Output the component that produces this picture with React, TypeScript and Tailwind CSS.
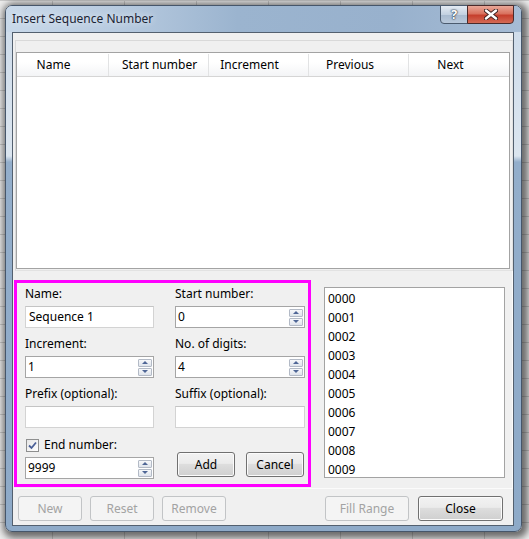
import React from 'react';

const sequence = ['0000', '0001', '0002', '0003', '0004', '0005', '0006', '0007', '0008', '0009'];

function SpinButton({ up }: { up?: boolean }) {
  return (
    <div className="flex h-[8px] w-[14px] items-center justify-center rounded-[1px] border border-[#b3bac6] bg-[linear-gradient(180deg,#f7f8fa,#dfe4ec)]">
      {up ? (
        <div className="h-0 w-0 border-x-[3px] border-b-[3px] border-x-transparent border-b-[#4f6696]" />
      ) : (
        <div className="h-0 w-0 border-x-[3px] border-t-[3px] border-x-transparent border-t-[#4f6696]" />
      )}
    </div>
  );
}

function SpinBox({ value }: { value: string }) {
  return (
    <div className="flex h-[22px] items-center border border-[#a5a5a5] bg-white pl-[2px]">
      <span className="flex-1 leading-[16px]">{value}</span>
      <div className="mr-[1px] flex flex-col gap-[1px]">
        <SpinButton up />
        <SpinButton />
      </div>
    </div>
  );
}

function TextBox({ value }: { value?: string }) {
  return (
    <div className="flex h-[22px] items-center border border-[#d3d3d3] border-t-[#c4c4c4] bg-white pl-[3px] leading-[16px]">
      {value}
    </div>
  );
}

function Label({ children }: { children: React.ReactNode }) {
  return <div className="h-[22px] pt-[2px] leading-[16px]">{children}</div>;
}

function WinButton({ label, w, disabled }: { label: string; w: string; disabled?: boolean }) {
  if (disabled) {
    return (
      <div className={`${w} flex h-[25px] items-center justify-center rounded-[3px] border border-[#c2c4c6] bg-[#f4f4f4] text-[#a3a3a3]`}>
        {label}
      </div>
    );
  }
  return (
    <div className={`${w} flex h-[25px] items-center justify-center rounded-[3px] border border-[#707070] bg-[linear-gradient(180deg,#f2f2f2_0%,#ebebeb_45%,#dddddd_50%,#cfcfcf_100%)] shadow-[inset_0_0_0_1px_#fbfbfb]`}>
      {label}
    </div>
  );
}

export default function App() {
  return (
    <div className="h-[539px] w-[529px] overflow-hidden bg-[#ececec] bg-[linear-gradient(90deg,#c9c9c9_1px,transparent_1px),linear-gradient(180deg,#c9c9c9_1px,transparent_1px)] bg-[length:72px_18px] bg-[position:52px_0] pl-[5px] pt-[5px] font-['Noto_Sans',sans-serif] text-[12px] text-black">
      <div className="flex h-[527px] w-[517px] flex-col rounded-[7px] border border-[#46566a] bg-[linear-gradient(180deg,#cddbea_0px,#dbe5ef_150px,#93aecb_156px,#8eaac8_100%)] shadow-[2px_2px_7px_4px_rgba(0,0,0,0.55)]">
        {/* title bar */}
        <div className="flex h-[26px] items-start justify-between rounded-t-[6px] bg-[linear-gradient(90deg,#c9d9ea_0%,#b7cadf_22%,#9bb4cf_45%,#98b1cd_75%,#a6bcd5_100%)]">
          <div className="pl-[6px] pt-[5px] leading-[16px] text-[#1b2333] [text-shadow:0_0_6px_#eef4fa]">
            Insert Sequence Number
          </div>
          <div className="-mt-px mr-[7px] flex">
            <div className="flex h-[19px] w-[28px] items-center justify-center rounded-bl-[4px] border border-[#4b5b6f] bg-[linear-gradient(180deg,#e4ebf3_0%,#c3d1e1_50%,#a9bbd0_55%,#b9c9db_100%)] text-[13px] font-bold leading-none text-white [text-shadow:0_0_1px_#2d3a4a,0_0_1px_#2d3a4a,0_0_2px_#2d3a4a]">
              ?
            </div>
            <div className="-ml-px flex h-[19px] w-[47px] items-center justify-center rounded-br-[4px] border border-[#4a2a2a] bg-[linear-gradient(180deg,#e9a898_0%,#d9725f_45%,#c63f2d_55%,#d46a55_100%)]">
              <svg width="14" height="11" viewBox="0 0 14 11">
                <path d="M2 1.5 L12 9.5 M12 1.5 L2 9.5" stroke="#3b2020" strokeWidth="4.2" strokeLinecap="round" />
                <path d="M2 1.5 L12 9.5 M12 1.5 L2 9.5" stroke="#ffffff" strokeWidth="2.4" strokeLinecap="round" />
              </svg>
            </div>
          </div>
        </div>

        {/* client area */}
        <div className="ml-[6px] flex h-[494px] w-[502px] flex-col border border-[#53606f] bg-[#f0f0f0]">
          <div className="ml-[2px] mt-[7px] h-[231px] w-[498px] border border-[#d9d9d9] border-b-[#e2e2e2] border-r-[#e2e2e2] pt-[11px]">
            <div className="h-[217px] w-[494px] border border-[#a3a3a3] bg-white">
              <div className="flex h-[24px] border-b border-[#d5d5d5] bg-[linear-gradient(180deg,#ffffff_0%,#ffffff_40%,#f3f4f6_100%)] pt-[1px]">
                <div className="flex w-[92px] items-center justify-center border-r border-[#e2e3e4] pr-[18px]">Name</div>
                <div className="flex w-[100px] items-center justify-center border-r border-[#e2e3e4] pl-[2px]">Start number</div>
                <div className="flex w-[100px] items-center justify-center border-r border-[#e2e3e4] pr-[18px]">Increment</div>
                <div className="flex w-[100px] items-center justify-center border-r border-[#e2e3e4] pr-[17px]">Previous</div>
                <div className="flex w-[100px] items-center justify-center pr-[17px]">Next</div>
              </div>
            </div>
          </div>

          <div className="ml-[1px] flex h-[218px] w-[499px] items-start border-b border-r border-[#fbfbfb] pt-[9px]">
            <div className="h-[207px] w-[297px] border-[3px] border-[#ff00ff] pl-[8px] pt-[1px]">
              <div className="grid grid-cols-[129px_130px] gap-x-[21px] gap-y-[6px]">
                <div>
                  <Label>Name:</Label>
                  <TextBox value="Sequence 1" />
                </div>
                <div>
                  <Label>Start number:</Label>
                  <SpinBox value="0" />
                </div>
                <div>
                  <Label>Increment:</Label>
                  <SpinBox value="1" />
                </div>
                <div>
                  <Label>No. of digits:</Label>
                  <SpinBox value="4" />
                </div>
                <div>
                  <Label>Prefix (optional):</Label>
                  <TextBox />
                </div>
                <div>
                  <Label>Suffix (optional):</Label>
                  <TextBox />
                </div>
                <div className="mt-[1px]">
                  <div className="h-[22px] pt-[2px]">
                    <div className="flex h-[16px] items-center">
                      <div className="ml-[1px] flex h-[13px] w-[13px] items-center justify-center border border-[#8e8f8f] bg-[linear-gradient(135deg,#e6e6e6,#ffffff)]">
                        <svg width="9" height="9" viewBox="0 0 9 9">
                          <path d="M1 4.5 L3.5 7 L8 1.5" fill="none" stroke="#4a5f97" strokeWidth="1.8" />
                        </svg>
                      </div>
                      <span className="ml-[5px] leading-[16px]">End number:</span>
                    </div>
                  </div>
                  <SpinBox value="9999" />
                </div>
                <div className="mt-[18px] flex gap-[11px] pl-[2px]">
                  <WinButton label="Add" w="w-[58px]" />
                  <WinButton label="Cancel" w="w-[58px]" />
                </div>
              </div>
            </div>

            <div className="ml-[13px] mt-[7px] h-[191px] w-[181px] border border-[#a3a3a3] bg-white pl-[3px] pt-[1px]">
              {sequence.map((s) => (
                <div key={s} className="h-[19px] leading-[19px]">
                  {s}
                </div>
              ))}
            </div>
          </div>

          <div className="mt-[7px] flex">
            <div className="ml-[5px] flex gap-[8px]">
              <WinButton label="New" w="w-[64px]" disabled />
              <WinButton label="Reset" w="w-[64px]" disabled />
              <WinButton label="Remove" w="w-[64px]" disabled />
            </div>
            <div className="ml-[99px] flex gap-[9px]">
              <WinButton label="Fill Range" w="w-[84px]" disabled />
              <WinButton label="Close" w="w-[85px]" />
            </div>
          </div>
        </div>
      </div>
    </div>
  );
}
